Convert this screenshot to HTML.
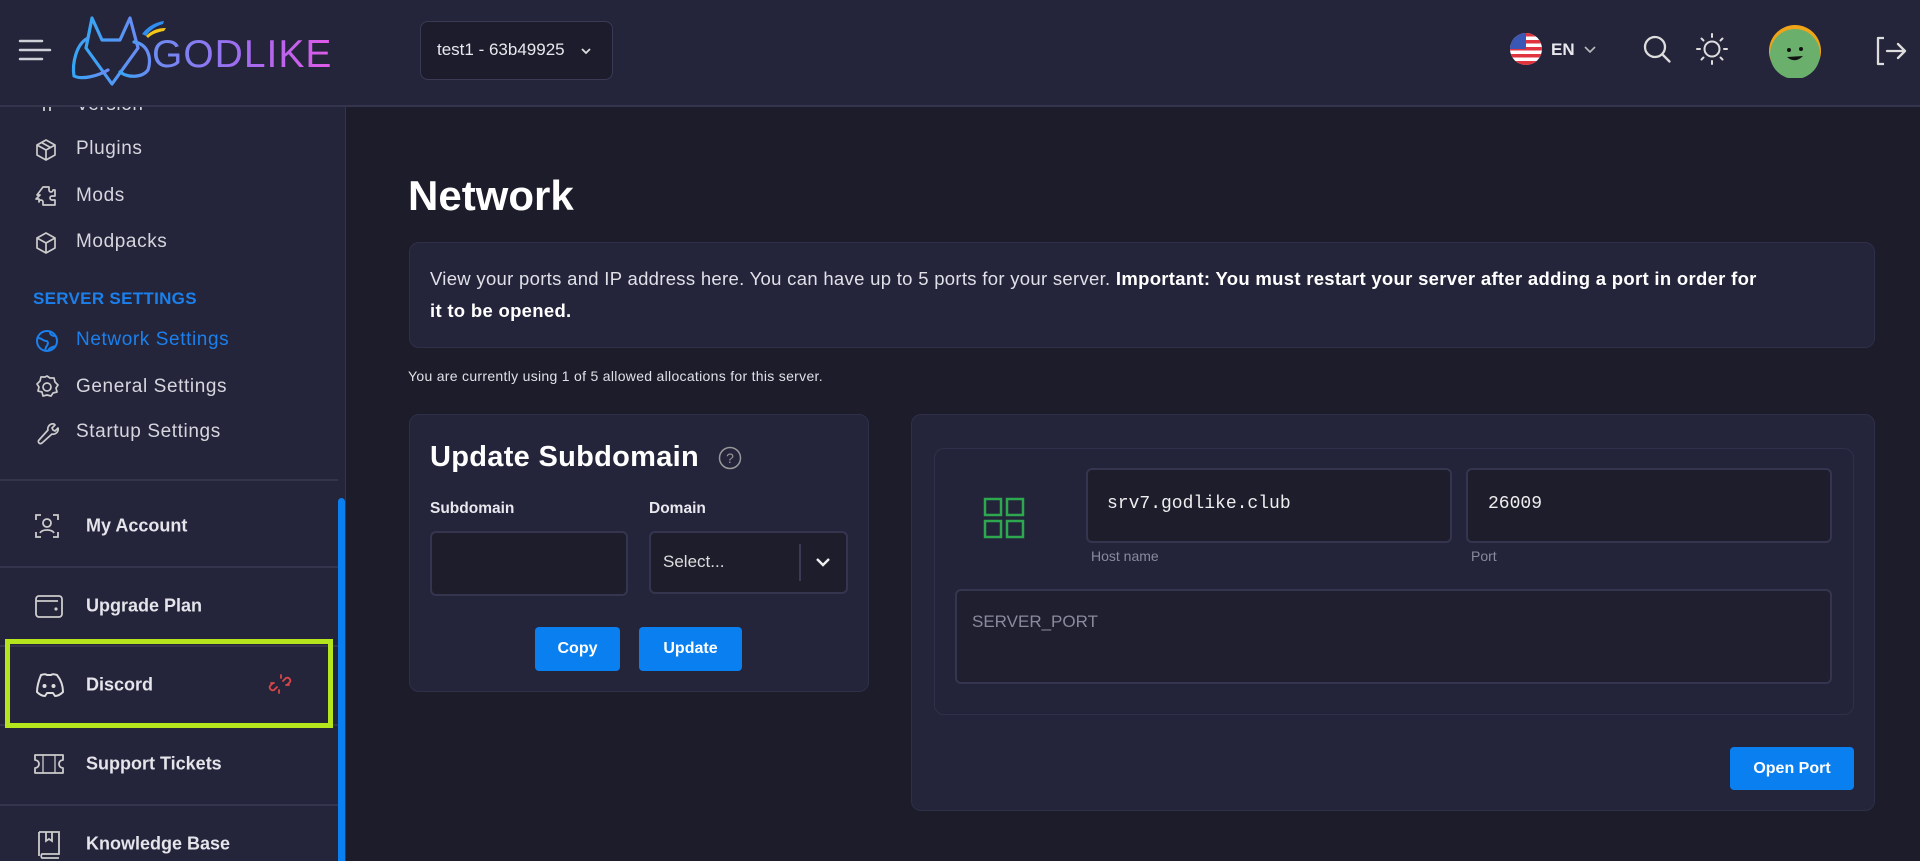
<!DOCTYPE html>
<html><head><meta charset="utf-8"><style>
*{box-sizing:border-box;margin:0;padding:0}
body{width:1920px;height:861px;overflow:hidden;background:#1c1c2a;font-family:"Liberation Sans",sans-serif;color:#e8e8ee;position:relative}
.abs{position:absolute}
.header{left:0;top:0;width:1920px;height:107px;background:#24243b;border-bottom:2px solid #34344c}
.side{left:0;top:107px;width:346px;height:754px;background:#24243b;border-right:1px solid #34344c;overflow:hidden}
.nav{position:absolute;left:76px;font-size:19px;letter-spacing:0.6px;color:#d6d6de;transform:translateY(-50%)}
.ic{position:absolute;transform:translate(-50%,-50%)}
.b{position:absolute;left:86px;font-size:18px;font-weight:bold;color:#e4e4ea;transform:translateY(-50%)}
.sep{position:absolute;left:0;width:338px;height:2px;background:#34344c}
.card{background:#24243b;border:1px solid #2f2f48;border-radius:10px}
.inp{background:#1d1d2c;border:2px solid #35354f;border-radius:6px}
.btn{background:#0a7ff0;border-radius:4px;color:#fff;font-weight:bold;font-size:16px;display:flex;align-items:center;justify-content:center}
svg{display:block}
</style></head><body>
<div class="abs header"></div>
<svg class="abs" style="left:18px;top:38px" width="34" height="24"><path d="M2 3h22M2 12h30M2 21h22" stroke="#cfcfd8" stroke-width="2.5" stroke-linecap="round"/></svg>
<svg class="abs" style="left:68px;top:14px" width="100" height="76" viewBox="0 0 100 76"><defs><linearGradient id="lg" x1="0" x2="1"><stop offset="0" stop-color="#35a6f5"/><stop offset="1" stop-color="#6a8cf5"/></linearGradient></defs>
<g fill="none" stroke="url(#lg)" stroke-width="3.2" stroke-linejoin="round" stroke-linecap="round">
<path d="M24 4 L34 26 H52 L62 4 L70 34 L44 70 L18 34 Z"/>
<path d="M20 24 C8 30 4 50 6 62 C14 66 30 62 40 56"/>
<path d="M66 28 C80 30 84 44 80 56 C74 64 60 64 52 58"/>
<path d="M28 40 h10 M48 40 h10"/>
</g>
<path d="M74 20 C80 12 88 8 96 7 L95 10 C88 12 82 16 78 22 Z" fill="#2f8ef0"/><path d="M78 22 C84 16 90 14 98 14 L96 17 C90 18 84 20 80 24Z" fill="#f5c518"/>
</svg>
<div class="abs" style="left:152px;top:33px;font-size:39px;letter-spacing:1px;background:linear-gradient(90deg,#6b8df2,#a16cf0 50%,#e05ae8);-webkit-background-clip:text;color:transparent">GODLIKE</div>
<div class="abs" style="left:420px;top:21px;width:193px;height:59px;background:#1c1c2c;border:1px solid #3a3a55;border-radius:8px"></div>
<div class="abs" style="left:437px;top:40px;font-size:17px;color:#e8e8ee">test1 - 63b49925</div>
<svg class="abs" style="left:580px;top:46px" width="12" height="10"><path d="M2 3l4 4 4-4" stroke="#ddd" stroke-width="1.8" fill="none"/></svg>
<svg class="abs" style="left:1510px;top:33px" width="32" height="32" viewBox="0 0 32 32"><clipPath id="c"><circle cx="16" cy="16" r="16"/></clipPath><g clip-path="url(#c)"><rect width="32" height="32" fill="#fff"/><g fill="#e0353f"><rect y="0" width="32" height="3.5"/><rect y="7" width="32" height="3.5"/><rect y="14" width="32" height="3.5"/><rect y="21" width="32" height="3.5"/><rect y="28" width="32" height="4"/></g><rect width="16" height="16" fill="#3b57b5"/></g></svg>
<div class="abs" style="left:1551px;top:40px;font-size:17px;font-weight:bold;color:#e8e8ee">EN</div>
<svg class="abs" style="left:1583px;top:45px" width="14" height="10"><path d="M2 2l5 5 5-5" stroke="#bbb" stroke-width="1.6" fill="none"/></svg>
<svg class="abs" style="left:1642px;top:34px" width="32" height="32"><circle cx="13" cy="13" r="10" stroke="#ddd" stroke-width="2.3" fill="none"/><path d="M20.5 20.5l7 7" stroke="#ddd" stroke-width="2.3" stroke-linecap="round"/></svg>
<svg class="abs" style="left:1696px;top:33px" width="32" height="32" viewBox="0 0 32 32"><circle cx="16" cy="16" r="7.5" stroke="#ddd" stroke-width="2" fill="none"/><g stroke="#ddd" stroke-width="2" stroke-linecap="round"><path d="M16 1v3M16 28v3M1 16h3M28 16h3M5.5 5.5l2 2M24.5 24.5l2 2M5.5 26.5l2-2M24.5 7.5l2-2"/></g></svg>
<svg class="abs" style="left:1768px;top:24px" width="54" height="54" viewBox="0 0 54 54"><circle cx="27" cy="27" r="26" fill="#f0a418"/><circle cx="27" cy="30" r="25" fill="#6ab06c"/><circle cx="21" cy="26" r="2" fill="#111"/><circle cx="33" cy="25" r="2" fill="#111"/><path d="M19 33 Q27 40 35 32 Z" fill="#111"/></svg>
<svg class="abs" style="left:1874px;top:35px" width="34" height="32" viewBox="0 0 34 32"><path d="M10 3H4v26h6" stroke="#ddd" stroke-width="2.3" fill="none" stroke-linejoin="round"/><path d="M13 16h18M24 9l7 7-7 7" stroke="#ddd" stroke-width="2.3" fill="none" stroke-linecap="round" stroke-linejoin="round"/></svg>

<div class="abs side">
 <div class="nav" style="top:-2px;color:#d6d6de">Version</div>
 <svg class="ic" style="left:47px;top:-4px" width="22" height="22"><rect x="3" y="2" width="16" height="12" rx="2" stroke="#ccc" stroke-width="1.8" fill="none"/><path d="M8 14v5M14 14v5" stroke="#ccc" stroke-width="1.8"/></svg>
 <div class="nav" style="top:42px">Plugins</div>
 <svg class="ic" style="left:46px;top:43px" width="24" height="24" viewBox="0 0 24 24"><path d="M12 2l9 5v10l-9 5-9-5V7z M3 7l9 5 9-5 M12 12v10 M7.5 4.5l9 5" stroke="#ccc" stroke-width="1.7" fill="none" stroke-linejoin="round"/></svg>
 <div class="nav" style="top:89px">Mods</div>
 <svg class="ic" style="left:46px;top:89px" width="24" height="24" viewBox="0 0 24 24"><path d="M9 3h6v3a2 2 0 0 0 4 0h2v6h-3a2 2 0 0 0 0 4h3v5H9v-3a2 2 0 0 0-4 0v-3H2l4-4H3z" stroke="#ccc" stroke-width="1.7" fill="none" stroke-linejoin="round"/></svg>
 <div class="nav" style="top:135px">Modpacks</div>
 <svg class="ic" style="left:46px;top:136px" width="24" height="24" viewBox="0 0 24 24"><path d="M12 2l9 5v10l-9 5-9-5V7z M3 7l9 5 9-5 M12 12v10" stroke="#ccc" stroke-width="1.7" fill="none" stroke-linejoin="round"/></svg>
 <div class="nav" style="top:192px;left:33px;font-size:17px;letter-spacing:0.3px;font-weight:bold;color:#1b80ec">SERVER SETTINGS</div>
 <div class="nav" style="top:233px;color:#1b80ec">Network Settings</div>
 <svg class="ic" style="left:47px;top:234px" width="24" height="24" viewBox="0 0 24 24"><circle cx="12" cy="12" r="10" stroke="#1b80ec" stroke-width="2" fill="none"/><path d="M3 9c4 0 5 3 8 3s2 4 0 6l-1 4M15 3c0 3 2 4 6 4M13 22c1-3 4-4 8-5" stroke="#1b80ec" stroke-width="2" fill="none"/></svg>
 <div class="nav" style="top:280px">General Settings</div>
 <svg class="ic" style="left:47px;top:280px" width="26" height="26" viewBox="0 0 26 26"><path d="M13 2l3 2 4 0 1 4 3 3-2 3 1 4-4 1-2 3-4-1-4 1-1-4-4-1 1-4-2-3 3-3 1-4 4 0z" stroke="#ccc" stroke-width="1.7" fill="none" stroke-linejoin="round"/><circle cx="13" cy="13" r="4" stroke="#ccc" stroke-width="1.7" fill="none"/></svg>
 <div class="nav" style="top:325px">Startup Settings</div>
 <svg class="ic" style="left:47px;top:326px" width="24" height="24" viewBox="0 0 24 24"><path d="M20 4l-3 3 1 2 2 1 3-3c1 4-3 7-6 6L7 22c-2 2-5-1-3-3l9-10c-1-3 2-7 6-6z" stroke="#ccc" stroke-width="1.7" fill="none" stroke-linejoin="round"/></svg>
 <div class="sep" style="top:372px"></div>
 <div class="b" style="top:419px">My Account</div>
 <svg class="ic" style="left:47px;top:419px" width="28" height="28" viewBox="0 0 28 28"><path d="M3 8V3h5M20 3h5v5M25 20v5h-5M8 25H3v-5" stroke="#ccc" stroke-width="1.8" fill="none"/><circle cx="14" cy="11" r="4" stroke="#ccc" stroke-width="1.8" fill="none"/><path d="M7 21c2-4 12-4 14 0" stroke="#ccc" stroke-width="1.8" fill="none"/></svg>
 <div class="sep" style="top:459px"></div>
 <div class="b" style="top:499px">Upgrade Plan</div>
 <svg class="ic" style="left:49px;top:499px" width="30" height="28" viewBox="0 0 30 28"><rect x="2" y="4" width="26" height="21" rx="3" stroke="#ccc" stroke-width="1.8" fill="none"/><path d="M2 9h22" stroke="#ccc" stroke-width="1.8"/><circle cx="22" cy="17" r="1.6" fill="#ccc"/></svg>
 <div class="sep" style="top:538px"></div>
 <div class="b" style="top:578px">Discord</div>
 <svg class="ic" style="left:49px;top:578px" width="34" height="28" viewBox="0 0 34 28"><path d="M9 4c3-1 5-1 6 0h4c1-1 3-1 6 0 4 5 6 11 6 17-3 3-6 4-8 4l-2-3-6 0-2 3c-2 0-5-1-8-4 0-6 2-12 4-17z" stroke="#ddd" stroke-width="2" fill="none" stroke-linejoin="round"/><circle cx="12.5" cy="15" r="2" fill="#ddd"/><circle cx="21.5" cy="15" r="2" fill="#ddd"/></svg>
 <svg class="ic" style="left:280px;top:577px" width="24" height="24" viewBox="0 0 24 24"><path d="M9 15l-3 3a3 3 0 0 1-4-4l3-3M15 9l3-3a3 3 0 0 1 4 4l-3 3M13 3v3M18 13h3M6 11H3M11 18v3" stroke="#d94848" stroke-width="1.8" fill="none" stroke-linecap="round"/></svg>
 <div class="sep" style="top:617px"></div>
 <div class="b" style="top:657px">Support Tickets</div>
 <svg class="ic" style="left:49px;top:657px" width="32" height="24" viewBox="0 0 32 24"><path d="M2 3h28v5a4 4 0 0 0 0 8v5H2v-5a4 4 0 0 0 0-8z" stroke="#ccc" stroke-width="1.8" fill="none" stroke-linejoin="round"/><path d="M10 3v18M22 3v18" stroke="#ccc" stroke-width="1.3"/></svg>
 <div class="sep" style="top:697px"></div>
 <div class="b" style="top:737px">Knowledge Base</div>
 <svg class="ic" style="left:49px;top:737px" width="26" height="30" viewBox="0 0 26 30"><path d="M3 3h20v22H6a3 3 0 0 0 0 4h17M3 3v24" stroke="#ccc" stroke-width="1.8" fill="none"/><path d="M10 3v9l3-2 3 2V3" stroke="#ccc" stroke-width="1.8" fill="none"/></svg>
 <div class="abs" style="left:338px;top:391px;width:7px;height:370px;background:#0a7ff0;border-radius:4px"></div>
</div>
<div class="abs" style="left:5px;top:639px;width:328px;height:89px;border:5px solid #b5e61d"></div>

<div class="abs" style="left:408px;top:172px;font-size:42px;font-weight:bold;color:#fff">Network</div>
<div class="abs card" style="left:409px;top:242px;width:1466px;height:106px"></div>
<div class="abs" style="left:430px;top:263px;width:1440px;font-size:18.5px;letter-spacing:0.3px;line-height:32px;color:#e0e0e8;white-space:nowrap">View your ports and IP address here. You can have up to 5 ports for your server. <b style="color:#fff">Important: You must restart your server after adding a port in order for<br>it to be opened.</b></div>
<div class="abs" style="left:408px;top:368px;font-size:14px;letter-spacing:0.3px;color:#e0e0e8">You are currently using 1 of 5 allowed allocations for this server.</div>

<div class="abs card" style="left:409px;top:414px;width:460px;height:278px"></div>
<div class="abs" style="left:430px;top:441px;font-size:29px;letter-spacing:0.3px;font-weight:bold;color:#fff">Update Subdomain</div>
<svg class="abs" style="left:718px;top:446px" width="24" height="24"><circle cx="12" cy="12" r="10.5" stroke="#999" stroke-width="1.5" fill="none"/><text x="12" y="17" font-size="14" fill="#999" text-anchor="middle" font-family="Liberation Sans">?</text></svg>
<div class="abs" style="left:430px;top:500px;font-size:15.5px;font-weight:bold">Subdomain</div>
<div class="abs" style="left:649px;top:500px;font-size:15.5px;font-weight:bold">Domain</div>
<div class="abs inp" style="left:430px;top:531px;width:198px;height:65px"></div>
<div class="abs inp" style="left:649px;top:531px;width:199px;height:63px"></div>
<div class="abs" style="left:663px;top:552px;font-size:17px;color:#ddd">Select...</div>
<div class="abs" style="left:799px;top:544px;width:2px;height:37px;background:#3a3a55"></div>
<svg class="abs" style="left:815px;top:556px" width="16" height="12"><path d="M2 3l6 6 6-6" stroke="#eee" stroke-width="2.4" fill="none"/></svg>
<div class="abs btn" style="left:535px;top:627px;width:85px;height:44px">Copy</div>
<div class="abs btn" style="left:639px;top:627px;width:103px;height:44px">Update</div>

<div class="abs card" style="left:911px;top:414px;width:964px;height:397px"></div>
<div class="abs" style="left:934px;top:448px;width:920px;height:267px;border:1px solid #30304a;border-radius:10px;background:#23233a"></div>
<svg class="abs" style="left:983px;top:497px" width="44" height="44"><g fill="none" stroke="#2ea84f" stroke-width="2.5"><rect x="2" y="2" width="16" height="16"/><rect x="24" y="2" width="16" height="16"/><rect x="2" y="24" width="16" height="16"/><rect x="24" y="24" width="16" height="16"/></g></svg>
<div class="abs inp" style="left:1086px;top:468px;width:366px;height:75px"></div>
<div class="abs inp" style="left:1466px;top:468px;width:366px;height:75px"></div>
<div class="abs" style="left:1107px;top:494px;font-family:'Liberation Mono',monospace;font-size:18px;color:#eee">srv7.godlike.club</div>
<div class="abs" style="left:1488px;top:494px;font-family:'Liberation Mono',monospace;font-size:18px;color:#eee">26009</div>
<div class="abs" style="left:1091px;top:548px;font-size:14px;color:#8a8a9c">Host name</div>
<div class="abs" style="left:1471px;top:548px;font-size:14px;color:#8a8a9c">Port</div>
<div class="abs inp" style="left:955px;top:589px;width:877px;height:95px;background:#1f1f30"></div>
<div class="abs" style="left:972px;top:612px;font-size:17px;color:#8a8a9c">SERVER_PORT</div>
<div class="abs btn" style="left:1730px;top:747px;width:124px;height:43px">Open Port</div>
</body></html>
